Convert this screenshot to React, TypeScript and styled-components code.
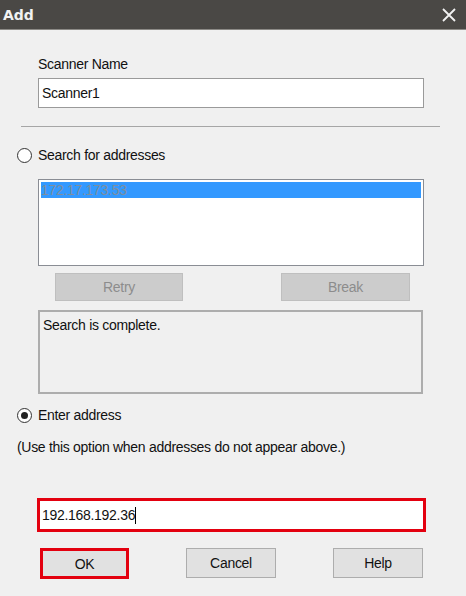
import styled, { createGlobalStyle } from 'styled-components'
import { ReactElement } from 'react'

const GlobalStyle = createGlobalStyle`
  html, body {
    margin: 0;
    padding: 0;
    background: #f0f0f0;
  }
  body {
    font-family: 'Liberation Sans', Arial, sans-serif;
    font-size: 14px;
    color: #111;
  }
`

const Dialog = styled.div`
  width: 466px;
  height: 596px;
  background: #f0f0f0;
  display: flex;
  flex-direction: column;
  overflow: hidden;
`

const TitleBar = styled.div`
  height: 29px;
  background: #4a4845;
  border-bottom: 1px solid #8c8a86;
  display: flex;
  align-items: center;
  justify-content: space-between;
  padding: 0 10px 0 3px;
  color: #f2f2f2;
  font-family: 'DejaVu Sans', sans-serif;
  font-size: 14px;
  font-weight: bold;
`

const Body = styled.div`
  display: flex;
  flex-direction: column;
`

const Label = styled.div<{ left: number; top: number }>`
  margin: ${(p) => p.top}px 0 0 ${(p) => p.left}px;
  line-height: 16px;
  letter-spacing: -0.3px;
`

const TextBox = styled.div<{ top: number; highlight?: boolean }>`
  margin: ${(p) => p.top}px 0 0 ${(p) => (p.highlight ? 37 : 38)}px;
  width: ${(p) => (p.highlight ? 389 : 386)}px;
  height: ${(p) => (p.highlight ? 34 : 30)}px;
  box-sizing: border-box;
  background: #fff;
  border: ${(p) => (p.highlight ? '3px solid #e3000f' : '1px solid #9a9a9a')};
  display: flex;
  align-items: center;
  padding-left: ${(p) => (p.highlight ? 2 : 3)}px;
  letter-spacing: -0.3px;
`

const Caret = styled.span`
  display: inline-block;
  width: 1px;
  height: 17px;
  background: #000;
  vertical-align: middle;
`

const Separator = styled.div`
  margin: 18px 0 0 21px;
  width: 419px;
  height: 1px;
  background: #a6a6a6;
`

const RadioRow = styled.label<{ top: number }>`
  margin: ${(p) => p.top}px 0 0 17px;
  display: flex;
  align-items: center;
  gap: 6px;
  height: 16px;
  letter-spacing: -0.3px;
`

const RadioCircle = styled.span<{ checked?: boolean }>`
  width: 15px;
  height: 15px;
  box-sizing: border-box;
  border-radius: 50%;
  border: 1px solid #333;
  background: #fff;
  display: flex;
  align-items: center;
  justify-content: center;
  &::after {
    content: '';
    display: ${(p) => (p.checked ? 'block' : 'none')};
    width: 7px;
    height: 7px;
    border-radius: 50%;
    background: #222;
  }
`

const ListBox = styled.div`
  margin: 16px 0 0 38px;
  width: 386px;
  height: 87px;
  box-sizing: border-box;
  background: #fff;
  border: 1px solid #8a8d94;
  padding: 2px 2px 0 2px;
`

const ListItem = styled.div<{ selected?: boolean }>`
  height: 16px;
  line-height: 16px;
  background: ${(p) => (p.selected ? '#3399ff' : 'transparent')};
  color: ${(p) => (p.selected ? '#7d8ea0' : '#111')};
  letter-spacing: -0.3px;
`

const ButtonRow = styled.div<{ top: number }>`
  margin-top: ${(p) => p.top}px;
  display: flex;
`

const Button = styled.button<{ left: number; w: number; h: number; disabled?: boolean; focused?: boolean }>`
  margin-left: ${(p) => p.left}px;
  width: ${(p) => p.w}px;
  height: ${(p) => p.h}px;
  box-sizing: border-box;
  font-family: 'Liberation Sans', Arial, sans-serif;
  font-size: 14px;
  letter-spacing: -0.3px;
  padding: 0;
  background: ${(p) => (p.disabled ? '#cccccc' : '#e1e1e1')};
  color: ${(p) => (p.disabled ? '#8c8c8c' : '#111')};
  border: ${(p) =>
    p.focused ? '3px solid #e3000f' : p.disabled ? '1px solid #bfbfbf' : '1px solid #adadad'};
`

const StatusBox = styled.div`
  margin: 9px 0 0 38px;
  width: 385px;
  height: 84px;
  box-sizing: border-box;
  border: 2px solid #adadad;
  padding: 5px 3px;
  letter-spacing: -0.3px;
`

const CloseIcon = () => (
  <svg width="14" height="14" viewBox="0 0 14 14">
    <path d="M1 1 L13 13 M13 1 L1 13" stroke="#f2f2f2" strokeWidth="1.8" />
  </svg>
)

const App = (): ReactElement => {
  return (
    <>
      <GlobalStyle />
      <Dialog>
        <TitleBar>
          <span>Add</span>
          <CloseIcon />
        </TitleBar>
        <Body>
          <Label left={38} top={26}>Scanner Name</Label>
          <TextBox top={6}>Scanner1</TextBox>
          <Separator />
          <RadioRow top={20}>
            <RadioCircle />
            Search for addresses
          </RadioRow>
          <ListBox>
            <ListItem selected>172.17.173.53</ListItem>
          </ListBox>
          <ButtonRow top={7}>
            <Button left={55} w={128} h={28} disabled>Retry</Button>
            <Button left={98} w={129} h={28} disabled>Break</Button>
          </ButtonRow>
          <StatusBox>Search is complete.</StatusBox>
          <RadioRow top={13}>
            <RadioCircle checked />
            Enter address
          </RadioRow>
          <Label left={17} top={16}>(Use this option when addresses do not appear above.)</Label>
          <TextBox top={43} highlight>
            192.168.192.36
            <Caret />
          </TextBox>
          <ButtonRow top={16}>
            <Button left={40} w={89} h={31} focused>OK</Button>
            <Button left={57} w={90} h={30}>Cancel</Button>
            <Button left={57} w={90} h={30}>Help</Button>
          </ButtonRow>
        </Body>
      </Dialog>
    </>
  )
}

export default App
